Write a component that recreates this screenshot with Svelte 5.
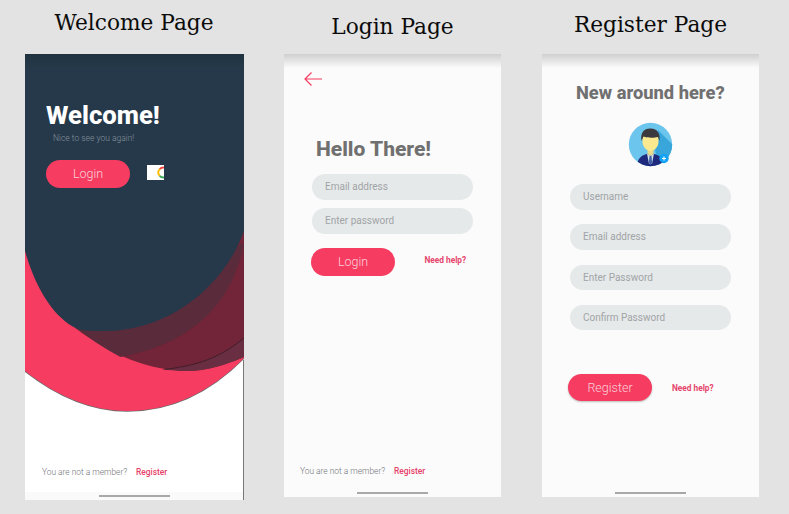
<script>
  const loginFields = ['Email address', 'Enter password'];
  const registerFields = ['Username', 'Email address', 'Enter Password', 'Confirm Password'];
</script>

<main class="board">
  <section class="column first">
    <h2 class="title t1">Welcome Page</h2>
    <div class="phone welcome">
      <svg class="art" viewBox="24.5 54 219 446" aria-hidden="true">
        <path class="line" d="M24.5 371C55 395 90 411 127 411C170 411 210 392 243.5 358" />
        <path fill="#f63c61" d="M24.5 235H243.5V358C210 392 170 411 127 411C90 411 55 395 24.5 371Z" />
        <path fill="#722538" d="M243.5 225V357C225 365 205 371 187 371C150 371 110 355 75 328L100 300Z" />
        <path fill="#5a2b3a" d="M243.5 243C234 295 200 342 120 357C105 349 90 339 75 328L100 300Z" />
        <path fill="#6a2e42" d="M243.5 338C225 353 205 365 163 369.5C175 371 181 371 187 371C205 371 225 365 243.5 357Z" />
        <path fill="none" stroke="#2d1a20" stroke-width=".7" d="M243.5 338C225 353 205 365 163 369.5" />
        <path fill="#25394a" d="M24.5 54H243.5V231C222 290 165 331 105 331C90 331 82 331 75 328C55 318 36 292 24.5 251Z" />
      </svg>
      <div class="shade dark"></div>
      <div class="welcome-body">
        <h1 class="hero">Welcome!</h1>
        <p class="sub">Nice to see you again!</p>
        <div class="welcome-actions">
          <button class="cta">Login</button>
          <span class="google">
            <svg viewBox="0 0 17 15" width="17" height="15" aria-hidden="true">
              <g fill="none" stroke-width="1.9">
                <path stroke="#ea4335" d="M12.7 4.2A5 5 0 0 1 17 2.6" />
                <path stroke="#fbbc05" d="M12.7 4.2A5 5 0 0 0 12.7 10.8" />
                <path stroke="#34a853" d="M12.7 10.8A5 5 0 0 0 17 12.4" />
              </g>
            </svg>
          </span>
        </div>
      </div>
      <div class="foot welcome-foot">
        <span>You are not a member?</span><a href="#r">Register</a>
      </div>
      <div class="home-bar"><i></i></div>
    </div>
  </section>

  <section class="column second">
    <h2 class="title t2">Login Page</h2>
    <div class="phone light">
      <div class="shade"></div>
      <svg class="back" viewBox="0 0 18 14" width="18" height="14" aria-hidden="true">
        <path fill="none" stroke="#f73c61" stroke-width="1.2" d="M18 7H1M7.5 .5L1 7l6.5 6.5" />
      </svg>
      <div class="login-body">
        <h1 class="heading hello">Hello There!</h1>
        {#each loginFields as f}
          <div class="field">{f}</div>
        {/each}
        <div class="actions">
          <button class="cta">Login</button>
          <a class="help" href="#h">Need help?</a>
        </div>
      </div>
      <div class="foot login-foot">
        <span>You are not a member?</span><a href="#r">Register</a>
      </div>
      <div class="home-bar"><i></i></div>
    </div>
  </section>

  <section class="column third">
    <h2 class="title t3">Register Page</h2>
    <div class="phone light">
      <div class="shade"></div>
      <div class="register-body">
        <h1 class="heading new">New around here?</h1>
        <svg class="avatar" viewBox="0 0 46 46" width="46" height="46" aria-hidden="true">
          <defs><clipPath id="disc"><circle cx="22.5" cy="22.5" r="21.7" /></clipPath></defs>
          <circle cx="22.5" cy="22.5" r="21.7" fill="#6cc5ec" />
          <g clip-path="url(#disc)">
            <path fill="#38a6da" d="M30 8L46 24V46H30L26 20Z" />
            <path fill="#1f2a7c" d="M9 46C9 36 13 33 22.5 31C32 33 36 36 36 46Z" />
            <path fill="#cfe0ea" d="M19 31.5L22.5 34L26 31.5L24 42H21Z" />
            <path fill="#3f5fa8" d="M21.6 33.5H23.4L24.2 41L22.5 43L20.8 41Z" />
            <path fill="#e9d98a" d="M19.5 25H25.5V32L22.5 34L19.5 32Z" />
            <path fill="#fbe98f" d="M14.5 14H30.5V20C30.5 25 26 29 22.5 29C19 29 14.5 25 14.5 20Z" />
            <path fill="#3a3a3e" d="M13.5 19C12 11 16 6.5 22 6.5C29 6 32.5 11 31.5 19L30 15C26 16 19 16 15.5 14.5Z" />
          </g>
          <circle cx="36" cy="36.5" r="4.7" fill="#12a3f7" />
          <path stroke="#fff" stroke-width="1.1" d="M34 36.5H38M36 34.5V38.5" />
        </svg>
        <div class="stack">
          {#each registerFields as f}
            <div class="field">{f}</div>
          {/each}
        </div>
        <div class="actions register-actions">
          <button class="cta raised">Register</button>
          <a class="help" href="#h">Need help?</a>
        </div>
      </div>
      <div class="home-bar"><i></i></div>
    </div>
  </section>
</main>

<style>
  :global(body) { margin: 0; background: #e3e3e3; }
  .board {
    width: 789px; height: 514px; box-sizing: border-box; overflow: hidden;
    display: flex; padding-left: 24.5px; background: #e3e3e3;
    font-family: Roboto, "Liberation Sans", sans-serif;
  }
  .column { display: flex; flex-direction: column; }
  .first { width: 219px; margin-right: 40.5px; }
  .second { width: 217px; margin-right: 41px; }
  .third { width: 217px; }
  .title {
    margin: 0; height: 54px; box-sizing: border-box; text-align: center;
    font-family: "DejaVu Serif", "Liberation Serif", serif;
    font-weight: 400; font-size: 21.7px; line-height: 24px; color: #0b0b0b;
  }
  .t1 { padding-top: 11px; }
  .t2 { padding-top: 15px; }
  .t3 { padding-top: 13px; }
  .phone { position: relative; display: flex; flex-direction: column; overflow: hidden; }
  .welcome { height: 446px; background: #fff; }
  .light { height: 443px; background: #fbfbfb; }
  .art { position: absolute; inset: 0; width: 219px; height: 446px; }
  .line { fill: none; stroke: #6a6a6a; stroke-width: 1.4; }
  .welcome::after {
    content: ""; position: absolute; right: 0; top: 306px; bottom: 0; width: 1px; background: #777;
  }
  .shade {
    position: absolute; left: 0; right: 0; top: 0; height: 14px;
    background: linear-gradient(#cfcfcf, #fbfbfb);
  }
  .shade.dark { background: linear-gradient(#20323f, #25394a); }
  .welcome-body { position: relative; padding: 47px 0 0 21.5px; }
  .hero {
    margin: 0; font-size: 25.7px; line-height: 28px; font-weight: 800; color: #fff;
  }
  .sub {
    margin: 2.5px 0 0 7px; font-size: 8.5px; line-height: 12px; font-weight: 300; color: #86929c;
  }
  .welcome-actions { display: flex; align-items: center; gap: 16.5px; margin-top: 16.5px; }
  .cta {
    width: 84px; height: 27.5px; padding: 0; border: 0; border-radius: 14px;
    background: #f63c61; color: #fbd0da;
    font: 300 12.5px Roboto, "Liberation Sans", sans-serif;
  }
  .raised { box-shadow: 0 1px 2px rgba(0, 0, 0, .25); }
  .google { display: block; width: 17px; height: 15px; background: #fff; margin-top: -2.5px; }
  .google svg { display: block; }
  .foot {
    position: relative; display: flex; align-items: center;
    font-size: 8.4px; line-height: 12px; font-weight: 300; color: #6f7378;
  }
  .foot a { color: #e6406a; font-weight: 500; text-decoration: none; }
  .welcome-foot { margin-top: auto; padding-left: 17.5px; gap: 9px; margin-bottom: 22px; }
  .login-foot { margin-top: auto; padding-left: 16px; gap: 9px; margin-bottom: 20px; }
  .home-bar {
    position: absolute; left: 0; right: 0; bottom: 0; height: 8px; display: flex; justify-content: center;
    align-items: center;
  }
  .welcome .home-bar { background: #fafafa; }
  .home-bar i { display: block; width: 71px; height: 2px; background: #a8a8a8; }
  .back { display: block; position: relative; margin: 18px 0 0 20px; flex: none; }
  .login-body { position: relative; padding: 50px 0 0 28px; }
  .heading { margin: 0; font-weight: 800; color: #707070; }
  .hello { font-size: 21px; line-height: 26px; padding-left: 4px; margin-bottom: 12px; }
  .field {
    width: 161px; height: 25.5px; box-sizing: border-box; padding-left: 13px;
    border-radius: 13px; background: #e6e9ea; color: #a0a4a6;
    font-size: 10px; line-height: 25.5px;
  }
  .login-body .field + .field { margin-top: 8.5px; }
  .actions { display: flex; align-items: center; }
  .login-body .actions { margin: 14.5px 0 0 -1px; }
  .help { margin-left: 29.5px; margin-top: -4px; color: #e6456c; font-size: 8.3px; font-weight: 700; text-decoration: none; }
  .register-body {
    position: relative; padding: 27px 0 0 28px; display: flex; flex-direction: column;
  }
  .new { font-size: 18.3px; line-height: 24px; margin-left: 6px; }
  .avatar { display: block; margin: 16.5px 0 0 57.5px; }
  .stack { display: flex; flex-direction: column; gap: 14.8px; margin-top: 16.5px; }
  .register-actions { margin: 43.5px 0 0 -2px; }
  .register-actions .help { margin-top: 1px; margin-left: 20px; }
</style>
